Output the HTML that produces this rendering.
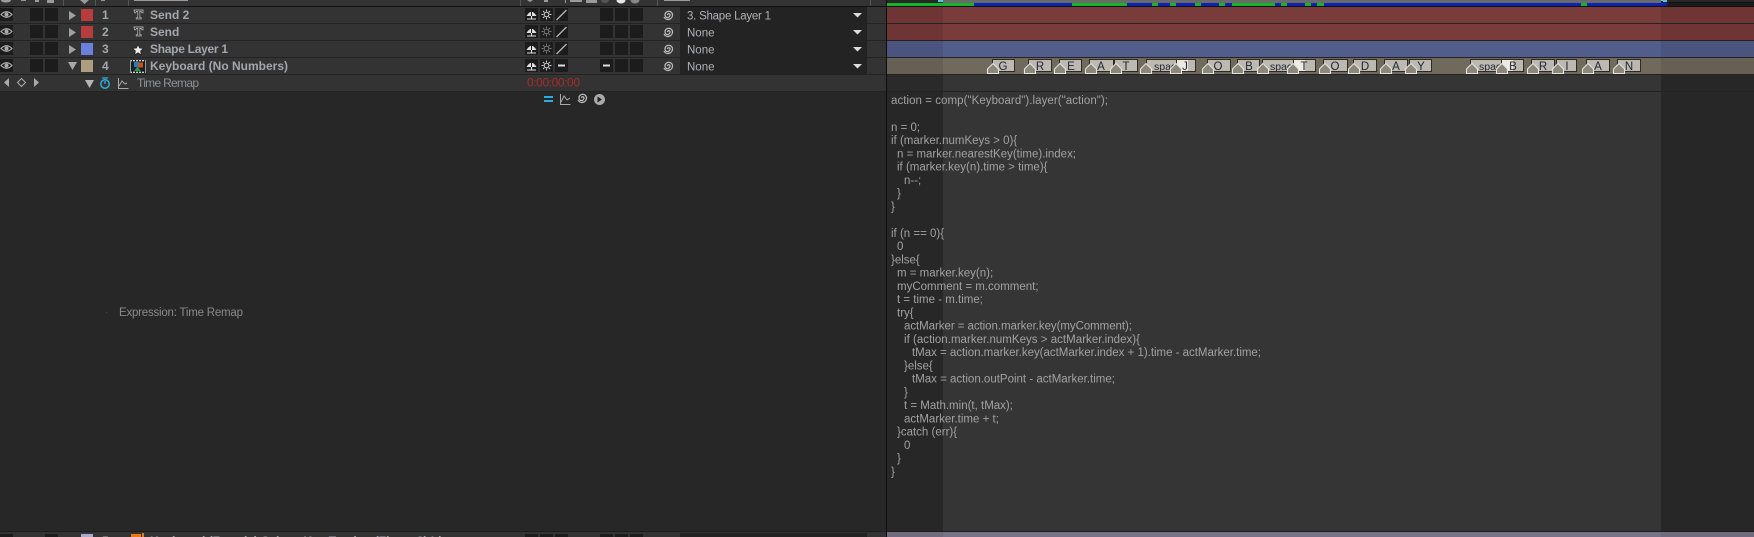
<!DOCTYPE html>
<html><head><meta charset="utf-8"><style>
html,body{margin:0;padding:0;background:#272727;width:1754px;height:537px;overflow:hidden}
svg{display:block}
text{font-family:"Liberation Sans",sans-serif}
.n{font-size:12px;font-weight:bold;fill:#a3a7ad}
.p{font-size:11.5px;fill:#b0b2b6}
.c{font-size:11.5px;fill:#a2a2a2}
.m{font-size:11.5px;fill:#1f2530;text-anchor:middle}
.s{font-size:10.5px;fill:#1f2530}
</style></head><body>
<svg width="1754" height="537" viewBox="0 0 1754 537" xmlns="http://www.w3.org/2000/svg">
<defs>
<g id="sw"><rect width="13" height="13" y="1" fill="#1c1c1c"/></g>
<g id="eye"><rect x="0" y="1" width="13" height="13" fill="#1c1c1c"/><path d="M1 7.5Q6.5 2 12 7.5Q6.5 13 1 7.5Z" fill="none" stroke="#aaa" stroke-width="1.2"/><circle cx="6.500" cy="7.500" r="2" fill="#aaa"/></g>
<g id="shy"><rect width="13" height="13" y="1" fill="#1c1c1c"/><path d="M1.500 9Q6.500 0.500 11.500 9Z" fill="#e0e0e0"/><path d="M6.500 4v5" stroke="#1c1c1c"/><path d="M6.500 9v3M2 12h9" stroke="#e0e0e0" stroke-width="1.100"/></g>
<g id="sun"><rect width="13" height="13" y="1" fill="#1c1c1c"/><circle cx="6.500" cy="7.500" r="2.300" fill="none" stroke="#777"/><path d="M6.500 2.500v2M6.500 10.500v2M1.500 7.500h2M9.500 7.500h2M3 4l1.400 1.400M8.600 9.600L10 11M3 11l1.400-1.400M8.600 5.400L10 4" stroke="#777"/></g>
<g id="sunw"><rect width="13" height="13" y="1" fill="#1c1c1c"/><circle cx="6.500" cy="7.500" r="2.300" fill="none" stroke="#ccc"/><path d="M6.500 2.500v2M6.500 10.500v2M1.500 7.500h2M9.500 7.500h2M3 4l1.400 1.400M8.600 9.600L10 11M3 11l1.400-1.400M8.600 5.400L10 4" stroke="#ccc"/></g>
<g id="sl"><rect width="13" height="13" y="1" fill="#1c1c1c"/><path d="M1.500 13L11.500 3" stroke="#b5b5b5" stroke-width="1.300"/></g>
<g id="dash"><rect width="13" height="13" y="1" fill="#1c1c1c"/><path d="M3 7.500h7" stroke="#ddd" stroke-width="2"/></g>
<path id="sp" d="M5.500 5.500A1.250 1.250 0 0 1 8 5.500A2.500 2.500 0 0 1 3 5.500A3.750 3.750 0 0 1 10.500 5.500A4.500 4.500 0 0 1 2 7.500" transform="translate(0 1.500)" fill="none" stroke="#bbb" stroke-width="1.300"/>
<path id="dd" d="M0 0h9l-4.500 4.500z" fill="#ddd"/>
<path id="tri" d="M0 0l7 4.500l-7 4.500z" fill="#a0a0a0"/>
<g id="T"><path d="M1 1.500h9v2.800h-1l-.8-1.300h-1.400v6.200h1.500v1.200h-5v-1.200h1.500v-6.200h-1.400l-.8 1.300h-1z" fill="#262626" stroke="#a8a8a8" stroke-width=".9"/></g>
<path id="mk" d="M0 0l5.500 5.500v4.500h-11v-4.500z" fill="#8b877b" stroke="#e4e2dc" stroke-width="1.100"/>
</defs>

<rect width="1754" height="537" fill="#272727"/>
<!-- header -->
<rect width="886" height="6" fill="#333"/>
<rect y="6" width="886" height="1" fill="#111"/>
<g fill="#9a9a9a">
<ellipse cx="6" cy="0.500" rx="5" ry="2"/><rect x="21" y="0" width="5" height="1"/><rect x="35" y="0" width="4" height="2"/><rect x="47" y="0" width="7" height="3"/>
<path d="M80 0h9l-4.500 4z"/><rect x="101" y="0" width="4" height="1"/>
<rect x="134" y="0" width="54" height="1"/>
<path d="M527 0h6l-3 2z"/><rect x="544" y="0" width="4" height="2"/>
<rect x="565" y="0" width="1" height="3"/><rect x="570" y="0" width="12" height="2"/><rect x="586" y="0" width="11" height="3"/>
<rect x="664" y="0" width="26" height="1"/></g>
<ellipse cx="605" cy="0" rx="4" ry="3" fill="#555"/><ellipse cx="621" cy="0" rx="4.500" ry="3.500" fill="#e6e6e6"/><ellipse cx="635" cy="0" rx="4.500" ry="3.500" fill="#888"/>
<g fill="#555"><rect x="63" y="0" width="1" height="6"/><rect x="95" y="0" width="1" height="6"/><rect x="128" y="0" width="1" height="6"/><rect x="520" y="0" width="1" height="6"/><rect x="657" y="0" width="1" height="6"/><rect x="870" y="0" width="1" height="6"/></g>

<!-- left rows -->
<rect y="7" width="886" height="84" fill="#333"/>
<g fill="#232323"><rect y="23" width="886" height="1"/><rect y="40" width="886" height="1"/><rect y="57" width="886" height="1"/><rect y="74" width="886" height="1"/><rect y="91" width="886" height="1"/></g>

<use href="#eye" y="7"/><use href="#eye" y="24"/><use href="#eye" y="41"/><use href="#eye" y="58"/>
<use href="#sw" x="30" y="7"/><use href="#sw" x="45" y="7"/><use href="#sw" x="30" y="24"/><use href="#sw" x="45" y="24"/><use href="#sw" x="30" y="41"/><use href="#sw" x="45" y="41"/><use href="#sw" x="30" y="58"/><use href="#sw" x="45" y="58"/>
<use href="#tri" x="69" y="11"/><use href="#tri" x="69" y="28"/><use href="#tri" x="69" y="45"/>
<path d="M68 62h9l-4.500 8z" fill="#a8a8a8"/>
<rect x="81" y="9" width="12" height="12" fill="#b73c3c"/>
<rect x="81" y="26" width="12" height="12" fill="#b73c3c"/>
<rect x="81" y="43" width="12" height="12" fill="#6b7fdc"/>
<rect x="81" y="60" width="12" height="12" fill="#ae9e80"/>
<text x="102" y="19" class="n">1</text><text x="102" y="36" class="n">2</text><text x="102" y="53" class="n">3</text><text x="102" y="70" class="n">4</text>
<use href="#T" x="133" y="8.500"/><use href="#T" x="133" y="25.500"/>
<path d="M138 44.500l1.600 3.500l3.900.4l-2.900 2.600l.8 3.800l-3.400-2l-3.400 2l.8-3.800l-2.900-2.600l3.900-.4z" fill="#eee" stroke="#222" stroke-width=".8"/>
<rect x="130" y="60" width="16" height="13" fill="#1a1f22"/>
<path d="M130 60.700h16M130 72.300h16" stroke="#cfcfcf" stroke-width="1.400" stroke-dasharray="2 1"/>
<rect x="130" y="60" width="1" height="13" fill="#999"/><rect x="145" y="60" width="1" height="13" fill="#999"/>
<rect x="134" y="62" width="5" height="5" fill="#2a78c8"/><rect x="138" y="62.500" width="5" height="5" fill="#c8501e"/><path d="M134 71l3.500-4.500l3.500 4.500z" fill="#1f9a4a"/>
<text x="150" y="19" class="n">Send 2</text><text x="150" y="36" class="n">Send</text><text x="150" y="53" class="n" textLength="78">Shape Layer 1</text><text x="150" y="70" class="n">Keyboard (No Numbers)</text>

<!-- switches -->
<use href="#shy" x="525" y="7"/><use href="#sunw" x="540" y="7"/><use href="#sl" x="555" y="7"/>
<use href="#shy" x="525" y="24"/><use href="#sun" x="540" y="24"/><use href="#sl" x="555" y="24"/>
<use href="#shy" x="525" y="41"/><use href="#sun" x="540" y="41"/><use href="#sl" x="555" y="41"/>
<use href="#shy" x="525" y="58"/><use href="#sunw" x="540" y="58"/><use href="#dash" x="555" y="58"/>
<use href="#sw" x="600" y="7"/><use href="#sw" x="615" y="7"/><use href="#sw" x="630" y="7"/>
<use href="#sw" x="600" y="24"/><use href="#sw" x="615" y="24"/><use href="#sw" x="630" y="24"/>
<use href="#sw" x="600" y="41"/><use href="#sw" x="615" y="41"/><use href="#sw" x="630" y="41"/>
<use href="#dash" x="600" y="58"/><use href="#sw" x="615" y="58"/><use href="#sw" x="630" y="58"/>
<use href="#sp" x="662" y="8"/><use href="#sp" x="662" y="25"/><use href="#sp" x="662" y="42"/><use href="#sp" x="662" y="59"/>
<g fill="#232323"><rect x="680" y="7" width="187" height="16"/><rect x="680" y="24" width="187" height="16"/><rect x="680" y="41" width="187" height="16"/><rect x="680" y="58" width="187" height="16"/></g>
<text x="687" y="19.500" class="p" textLength="84">3. Shape Layer 1</text><text x="687" y="36.500" class="p">None</text><text x="687" y="53.500" class="p">None</text><text x="687" y="70.500" class="p">None</text>
<use href="#dd" x="853" y="13"/><use href="#dd" x="853" y="30"/><use href="#dd" x="853" y="47"/><use href="#dd" x="853" y="64"/>

<!-- time remap row -->
<path d="M9 78v9l-5-4.500z" fill="#aaa"/>
<path d="M21.500 78.500l4 4l-4 4l-4-4z" fill="none" stroke="#aaa"/>
<path d="M34 78v9l5-4.500z" fill="#aaa"/>
<path d="M85 80h9l-4.500 8z" fill="#b5b5b5"/>
<circle cx="105" cy="84" r="4.200" fill="none" stroke="#2eaee0" stroke-width="1.500"/><path d="M102 78h6M105 84v-3" stroke="#2eaee0" stroke-width="1.300"/>
<path d="M118.500 78v10.500h10M119 86l3-5l3 3l2-1" fill="none" stroke="#aaa"/>
<text x="137" y="87" fill="#8c9096" style="font-size:12px" textLength="62">Time Remap</text>
<text x="527" y="86.500" fill="#a62c2c" style="font-size:12px" textLength="53">0:00:00:00</text>

<!-- expression row icons -->
<rect x="544" y="96" width="9" height="2" fill="#2eaee0"/><rect x="544" y="100" width="9" height="2" fill="#2eaee0"/>
<path d="M560.500 94v10.500h10M561 102l3-6l3 4l3-2" fill="none" stroke="#aaa"/>
<use href="#sp" x="576" y="91"/>
<circle cx="599.500" cy="99.500" r="5.500" fill="#aaa"/><path d="M597.500 96.500v6l4.500-3z" fill="#222"/>

<text x="119" y="316" fill="#8a8a8a" style="font-size:11.5px" textLength="124">Expression: Time Remap</text>
<rect x="106" y="312" width="1" height="1" fill="#444"/>

<!-- divider -->
<rect x="886" y="0" width="1" height="537" fill="#0c0c0c"/>

<!-- timeline -->
<rect x="887" y="0" width="867" height="537" fill="#272727"/>
<rect x="943" y="75" width="718" height="457" fill="#353535"/>
<rect x="887" y="75" width="56" height="16" fill="#2a2a2a"/>
<rect x="943" y="0" width="718" height="3" fill="#6a6a6a"/>
<rect x="1667" y="2" width="87" height="1" fill="#111"/>
<rect x="887" y="3" width="780" height="3" fill="#0c22b4"/>
<g fill="#15b52a">
<rect x="887" y="3" width="87" height="3"/><rect x="1072" y="3" width="55" height="3"/><rect x="1152" y="3" width="6" height="3"/><rect x="1170" y="3" width="6" height="3"/><rect x="1195" y="3" width="6" height="3"/><rect x="1219" y="3" width="6" height="3"/><rect x="1232" y="3" width="43" height="3"/><rect x="1281" y="3" width="6" height="3"/><rect x="1305" y="3" width="6" height="3"/><rect x="1317" y="3" width="7" height="3"/><rect x="1581" y="3" width="6" height="3"/>
</g>
<rect x="1667" y="3" width="87" height="3" fill="#1c1c1c"/>
<rect x="938" y="0" width="5" height="2" fill="#5cc3f0"/><rect x="1663" y="0" width="4" height="2" fill="#5cc3f0"/><rect x="1661" y="0" width="3" height="1" fill="#5cc3f0"/>
<rect x="887" y="6" width="867" height="1" fill="#111"/>

<rect x="887" y="7" width="867" height="16" fill="#7a3b3b"/><rect x="887" y="24" width="867" height="16" fill="#7a3b3b"/>
<rect x="887" y="41" width="867" height="16" fill="#535d8c"/><rect x="887" y="58" width="867" height="16" fill="#706a5c"/>
<g fill="#000" opacity=".09"><rect x="887" y="7" width="56" height="67"/><rect x="1661" y="7" width="93" height="67"/></g>
<g fill="#232323"><rect x="887" y="23" width="867" height="1"/><rect x="887" y="40" width="867" height="1"/><rect x="887" y="57" width="867" height="1"/><rect x="887" y="74" width="867" height="1"/><rect x="887" y="91" width="867" height="1"/></g>

<!-- markers -->
<g fill="#bdb9b1" stroke="#2a2a2a" stroke-width="1">
<rect x="992.500" y="59.500" width="22" height="12"/><rect x="1028.500" y="59.500" width="23" height="12"/><rect x="1059.500" y="59.500" width="22" height="12"/><rect x="1089.500" y="59.500" width="24" height="12"/><rect x="1114.500" y="59.500" width="23" height="12"/><rect x="1146.500" y="59.500" width="32" height="12"/>
<rect x="1176.500" y="59.500" width="19" height="12"/><rect x="1207.500" y="59.500" width="23" height="12"/><rect x="1237.500" y="59.500" width="22" height="12"/><rect x="1262.500" y="59.500" width="32" height="12"/><rect x="1293.500" y="59.500" width="22" height="12"/>
<rect x="1323.500" y="59.500" width="24" height="12"/><rect x="1353.500" y="59.500" width="23" height="12"/><rect x="1384.500" y="59.500" width="23" height="12"/><rect x="1409.500" y="59.500" width="22" height="12"/><rect x="1470.500" y="59.500" width="32" height="12"/><rect x="1501.500" y="59.500" width="22" height="12"/><rect x="1531.500" y="59.500" width="23" height="12"/><rect x="1556.500" y="59.500" width="20" height="12"/><rect x="1586.500" y="59.500" width="23" height="12"/><rect x="1617.500" y="59.500" width="23" height="12"/>
</g>
<g fill="#eeeae2"><rect x="1177" y="60" width="11" height="11"/><rect x="1294" y="60" width="11" height="11"/><rect x="1502" y="60" width="11" height="11"/></g>
<text class="m" x="1003" y="70">G</text><text class="m" x="1040" y="70">R</text><text class="m" x="1071" y="70">E</text><text class="m" x="1101" y="70">A</text><text class="m" x="1126" y="70">T</text>
<text class="s" x="1154" y="70">spac</text><text class="m" x="1185" y="70">J</text><text class="m" x="1218" y="70">O</text><text class="m" x="1249" y="70">B</text>
<text class="s" x="1270" y="70">spac</text><text class="m" x="1304" y="70">T</text><text class="m" x="1335" y="70">O</text><text class="m" x="1365" y="70">D</text><text class="m" x="1396" y="70">A</text><text class="m" x="1421" y="70">Y</text>
<text class="s" x="1479" y="70">spac</text><text class="m" x="1513" y="70">B</text><text class="m" x="1543" y="70">R</text><text class="m" x="1567" y="70">I</text><text class="m" x="1598" y="70">A</text><text class="m" x="1629" y="70">N</text>
<use href="#mk" x="993" y="63.500"/><use href="#mk" x="1030" y="63.500"/><use href="#mk" x="1060" y="63.500"/><use href="#mk" x="1091" y="63.500"/><use href="#mk" x="1116" y="63.500"/><use href="#mk" x="1146" y="63.500"/><use href="#mk" x="1176" y="63.500"/><use href="#mk" x="1208" y="63.500"/><use href="#mk" x="1238" y="63.500"/><use href="#mk" x="1263" y="63.500"/><use href="#mk" x="1293" y="63.500"/><use href="#mk" x="1325" y="63.500"/><use href="#mk" x="1354" y="63.500"/><use href="#mk" x="1386" y="63.500"/><use href="#mk" x="1411" y="63.500"/><use href="#mk" x="1472" y="63.500"/><use href="#mk" x="1502" y="63.500"/><use href="#mk" x="1533" y="63.500"/><use href="#mk" x="1558" y="63.500"/><use href="#mk" x="1588" y="63.500"/><use href="#mk" x="1619" y="63.500"/>

<!-- code -->
<text class="c" x="891" y="104" textLength="217">action = comp("Keyboard").layer("action");</text>
<text class="c" x="891" y="131">n = 0;</text>
<text class="c" x="891" y="144.200">if (marker.numKeys &gt; 0){</text>
<text class="c" x="897" y="157.500" textLength="179">n = marker.nearestKey(time).index;</text>
<text class="c" x="897" y="170.700">if (marker.key(n).time &gt; time){</text>
<text class="c" x="904" y="184">n--;</text>
<text class="c" x="897" y="197.200">}</text>
<text class="c" x="891" y="210.500">}</text>
<text class="c" x="891" y="237">if (n == 0){</text>
<text class="c" x="897" y="250.200">0</text>
<text class="c" x="891" y="263.500">}else{</text>
<text class="c" x="897" y="276.700">m = marker.key(n);</text>
<text class="c" x="897" y="290">myComment = m.comment;</text>
<text class="c" x="897" y="303.200">t = time - m.time;</text>
<text class="c" x="897" y="316.500">try{</text>
<text class="c" x="904" y="329.700" textLength="228">actMarker = action.marker.key(myComment);</text>
<text class="c" x="904" y="343" textLength="236">if (action.marker.numKeys &gt; actMarker.index){</text>
<text class="c" x="912" y="356.200" textLength="349">tMax = action.marker.key(actMarker.index + 1).time - actMarker.time;</text>
<text class="c" x="904" y="369.500">}else{</text>
<text class="c" x="912" y="382.700" textLength="203">tMax = action.outPoint - actMarker.time;</text>
<text class="c" x="904" y="396">}</text>
<text class="c" x="904" y="409.200">t = Math.min(t, tMax);</text>
<text class="c" x="904" y="422.500">actMarker.time + t;</text>
<text class="c" x="897" y="435.700">}catch (err){</text>
<text class="c" x="904" y="449">0</text>
<text class="c" x="897" y="462.200">}</text>
<text class="c" x="891" y="475.500">}</text>

<!-- bottom row -->
<rect x="0" y="532" width="886" height="5" fill="#333"/>
<rect x="0" y="531" width="1754" height="1" fill="#1d1d1d"/>
<rect x="0" y="534" width="13" height="3" fill="#1c1c1c"/><rect x="45" y="534" width="13" height="3" fill="#1c1c1c"/>
<rect x="81" y="534" width="12" height="3" fill="#aaaacc"/>
<rect x="131" y="534" width="10" height="3" fill="#e87a10"/><rect x="142" y="533" width="2" height="4" fill="#e87a10"/>
<text x="102" y="545" class="n">5</text>
<text x="150" y="545" class="n">Keyboard (Female) Select. Key Tracker (Flame 2) Line</text>
<rect x="525" y="534" width="13" height="3" fill="#1c1c1c"/><rect x="540" y="534" width="13" height="3" fill="#1c1c1c"/><rect x="555" y="534" width="13" height="3" fill="#1c1c1c"/><rect x="600" y="534" width="13" height="3" fill="#1c1c1c"/><rect x="615" y="534" width="13" height="3" fill="#1c1c1c"/><rect x="630" y="534" width="13" height="3" fill="#1c1c1c"/>
<rect x="680" y="533" width="187" height="4" fill="#232323"/>
<text x="687" y="546" class="p">None</text>
<rect x="886" y="531" width="1" height="6" fill="#0c0c0c"/>
<rect x="887" y="532" width="867" height="5" fill="#777386"/>
<rect x="887" y="532" width="56" height="5" fill="#000" opacity=".06"/><rect x="1661" y="532" width="93" height="5" fill="#000" opacity=".06"/>
</svg>
</body></html>
